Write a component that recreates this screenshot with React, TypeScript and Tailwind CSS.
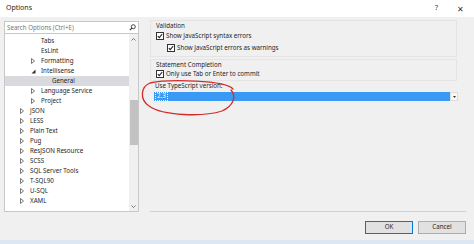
import React from "react";

type Node = { label: string; level: number; arrow?: "closed" | "open"; selected?: boolean };

const tree: Node[] = [
  { label: "Tabs", level: 1 },
  { label: "EsLint", level: 1 },
  { label: "Formatting", level: 1, arrow: "closed" },
  { label: "Intellisense", level: 1, arrow: "open" },
  { label: "General", level: 2, selected: true },
  { label: "Language Service", level: 1, arrow: "closed" },
  { label: "Project", level: 1, arrow: "closed" },
  { label: "JSON", level: 0, arrow: "closed" },
  { label: "LESS", level: 0, arrow: "closed" },
  { label: "Plain Text", level: 0, arrow: "closed" },
  { label: "Pug", level: 0, arrow: "closed" },
  { label: "ResJSON Resource", level: 0, arrow: "closed" },
  { label: "SCSS", level: 0, arrow: "closed" },
  { label: "SQL Server Tools", level: 0, arrow: "closed" },
  { label: "T-SQL90", level: 0, arrow: "closed" },
  { label: "U-SQL", level: 0, arrow: "closed" },
  { label: "XAML", level: 0, arrow: "closed" },
];

const Arrow = ({ kind }: { kind?: "closed" | "open" }) => {
  if (!kind) return <span className="w-[10px] shrink-0" />;
  return (
    <span className="w-[10px] shrink-0 flex items-center">
      {kind === "closed" ? (
        <svg width="4" height="6" viewBox="0 0 4 6">
          <path d="M0.5 0.5 L3.5 3 L0.5 5.5 Z" fill="none" stroke="#555" strokeWidth="0.8" />
        </svg>
      ) : (
        <svg width="5" height="5" viewBox="0 0 5 5">
          <path d="M4.5 0.5 L4.5 4.5 L0.5 4.5 Z" fill="#333" />
        </svg>
      )}
    </span>
  );
};

const Check = () => (
  <span className="w-[8px] h-[8px] border border-[#333] bg-white flex items-center justify-center shrink-0">
    <svg width="6" height="6" viewBox="0 0 6 6">
      <path d="M0.8 3.2 L2.3 4.7 L5.2 1" fill="none" stroke="#222" strokeWidth="1.1" />
    </svg>
  </span>
);

export default function App() {
  return (
    <div
      className="relative w-[474px] h-[244px] bg-[#f0f0f0] flex flex-col overflow-hidden text-[6.2px] text-[#1e1e1e]"
      style={{ fontFamily: '"Noto Sans", "Open Sans", sans-serif' }}
    >
      {/* Title bar */}
      <div className="h-[17px] bg-white flex items-center pl-[6px] pr-[10px] shrink-0">
        <span className="text-[7px]">Options</span>
        <span className="ml-auto text-[7px] text-[#333]">?</span>
        <span className="ml-[19px] text-[8px] text-[#333] leading-none">✕</span>
      </div>

      <div className="flex h-[195px] shrink-0">
        {/* Left column */}
        <div className="ml-[4px] w-[135px] pt-[4px] flex flex-col">
          <div className="h-[13px] bg-white border border-[#c8c8c8] flex items-center pl-[2px] pr-[2px]">
            <span className="text-[#777]">Search Options (Ctrl+E)</span>
            <svg className="ml-auto" width="7" height="7" viewBox="0 0 7 7">
              <circle cx="4.3" cy="2.7" r="2" fill="none" stroke="#333" strokeWidth="0.9" />
              <path d="M2.9 4.1 L0.8 6.2" stroke="#333" strokeWidth="1.1" />
            </svg>
          </div>
          <div className="flex-1 bg-white border border-[#c8c8c8] border-t-0 flex overflow-hidden">
            <div className="flex-1 pt-[2px] overflow-hidden">
              {tree.map((n) => (
                <div
                  key={n.label}
                  className={`h-[10px] flex items-center ${n.selected ? "bg-[#d9dade]" : ""}`}
                  style={{ paddingLeft: 15 + n.level * 11 }}
                >
                  <Arrow kind={n.arrow} />
                  <span className="whitespace-nowrap">{n.label}</span>
                </div>
              ))}
            </div>
            {/* Scrollbar */}
            <div className="w-[9px] bg-[#f0f0f0] flex flex-col items-center">
              <div className="h-[10px] flex items-center justify-center">
                <svg width="5" height="3" viewBox="0 0 5 3">
                  <path d="M0.5 2.5 L2.5 0.5 L4.5 2.5" fill="none" stroke="#555" strokeWidth="0.8" />
                </svg>
              </div>
              <div className="mt-[56px] w-[8px] h-[45px] bg-[#c2c2c2]" />
              <div className="mt-auto h-[10px] flex items-center justify-center">
                <svg width="5" height="3" viewBox="0 0 5 3">
                  <path d="M0.5 0.5 L2.5 2.5 L4.5 0.5" fill="none" stroke="#555" strokeWidth="0.8" />
                </svg>
              </div>
            </div>
          </div>
        </div>

        {/* Right panel */}
        <div className="ml-[11px] w-[316px] border-b border-[#d2d2d2] pt-[3px] pr-[8px] flex flex-col">
          <div className="border border-[#e4e4e4] pl-[5px] pb-[3px] mr-[1px]">
            <div className="h-[10px] flex items-center">Validation</div>
            <div className="h-[9px] flex items-center gap-[2px]">
              <Check />
              <span>Show JavaScript syntax errors</span>
            </div>
            <div className="mt-[3px] h-[10px] flex items-center gap-[2px] pl-[11px]">
              <Check />
              <span>Show JavaScript errors as warnings</span>
            </div>
          </div>
          <div className="mt-[2px] border border-[#e4e4e4] pl-[5px] pb-[2px] mr-[1px]">
            <div className="h-[9px] flex items-center">Statement Completion</div>
            <div className="h-[9px] flex items-center gap-[2px]">
              <Check />
              <span>Only use Tab or Enter to commit</span>
            </div>
          </div>
          <div className="pl-[5px] h-[10px] flex items-center">Use TypeScript version:</div>
          <div className="mt-[1px] ml-[4px] h-[9px] flex">
            <div className="flex-1 bg-[#3a99f4] flex items-center pl-[1px]">
              <span className="text-white border border-dotted border-white leading-none px-[1px]">2.3</span>
            </div>
            <div className="w-[8px] bg-[#f7f7f7] border border-[#ddd] flex items-center justify-center">
              <svg width="3" height="2" viewBox="0 0 3 2">
                <path d="M0 0 L3 0 L1.5 2 Z" fill="#333" />
              </svg>
            </div>
          </div>
        </div>
      </div>

      {/* Buttons */}
      <div className="flex justify-end gap-[5px] pr-[8px] pt-[9px]">
        <button className="w-[48px] h-[13px] bg-[#e1e1e1] border border-[#0078d7] text-[6.2px] leading-none">OK</button>
        <button className="w-[48px] h-[13px] bg-[#e1e1e1] border border-[#adadad] text-[6.2px] leading-none">Cancel</button>
      </div>

      <div className="mt-auto h-[4px] bg-[#dce7f3]" />

      {/* Red hand-drawn ellipse */}
      <svg className="absolute left-0 top-0 pointer-events-none" width="474" height="244" viewBox="0 0 474 244">
        <path
          d="M233 89 C 226 80, 168 79, 150 83 C 140 87, 140 100, 149 106 C 163 116, 203 117, 222 111 C 233 106, 237 97, 231 90"
          fill="none"
          stroke="#d42a2a"
          strokeWidth="1.3"
          strokeLinecap="round"
        />
      </svg>
    </div>
  );
}
